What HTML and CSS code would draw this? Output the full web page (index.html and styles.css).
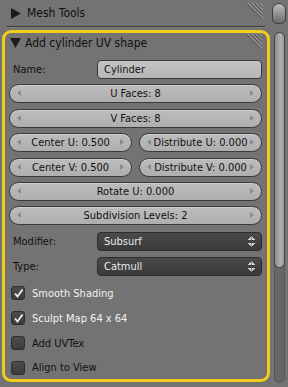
FILE: index.html
```html
<!DOCTYPE html>
<html>
<head>
  <title>Mesh Tools</title>
  <link rel="stylesheet" href="styles.css">
</head>
<body>
  <div class="app">
    <div class="main">
      <div class="hdr">
        <svg class="tri" width="10" height="11" viewBox="0 0 10 11"><polygon points="0,0 10,5.5 0,11" fill="#1c1c1c"/></svg>
        <span>Mesh Tools</span>
        <svg class="grip" width="16" height="16" viewBox="0 0 16 16">
          <path d="M1 0 L16 15 M5 0 L16 11 M9 0 L16 7 M13 0 L16 3" stroke="#9c9c9c" stroke-width="1"/>
          <path d="M0 1 L15 16 M4 1 L15 12 M8 1 L15 8 M12 1 L15 4" stroke="#5a5a5a" stroke-width="1"/>
        </svg>
      </div>
      <div class="sep"></div>

      <div class="panel">
        <div class="ptitle">
          <svg class="tri" width="11" height="10" viewBox="0 0 11 10"><polygon points="0,0 11,0 5.5,10" fill="#1c1c1c"/></svg>
          <span>Add cylinder UV shape</span>
          <svg class="grip" width="16" height="16" viewBox="0 0 16 16">
            <path d="M1 0 L16 15 M5 0 L16 11 M9 0 L16 7 M13 0 L16 3" stroke="#9c9c9c" stroke-width="1"/>
            <path d="M0 1 L15 16 M4 1 L15 12 M8 1 L15 8 M12 1 L15 4" stroke="#5a5a5a" stroke-width="1"/>
          </svg>
        </div>

        <div class="rows">
          <div class="row">
            <span class="label">Name:</span>
            <div class="field">Cylinder</div>
          </div>
          <div class="num"><i class="arr l"></i>U Faces: 8<i class="arr r"></i></div>
          <div class="num"><i class="arr l"></i>V Faces: 8<i class="arr r"></i></div>
          <div class="pair">
            <div class="num"><i class="arr l"></i>Center U: 0.500<i class="arr r"></i></div>
            <div class="num"><i class="arr l"></i>Distribute U: 0.000<i class="arr r"></i></div>
          </div>
          <div class="pair">
            <div class="num"><i class="arr l"></i>Center V: 0.500<i class="arr r"></i></div>
            <div class="num"><i class="arr l"></i>Distribute V: 0.000<i class="arr r"></i></div>
          </div>
          <div class="num"><i class="arr l"></i>Rotate U: 0.000<i class="arr r"></i></div>
          <div class="num"><i class="arr l"></i>Subdivision Levels: 2<i class="arr r"></i></div>

          <div class="row menu-row">
            <span class="label">Modifier:</span>
            <div class="menu">Subsurf<i class="updown"></i></div>
          </div>
          <div class="row">
            <span class="label">Type:</span>
            <div class="menu">Catmull<i class="updown"></i></div>
          </div>

          <div class="check on first"><span class="box">
            <svg width="11" height="11" viewBox="0 0 11 11"><path d="M2 5.5 L4.5 8.5 L9.5 1.5" stroke="#f0f0f0" stroke-width="1.8" fill="none"/></svg>
          </span>Smooth Shading</div>
          <div class="check on"><span class="box">
            <svg width="11" height="11" viewBox="0 0 11 11"><path d="M2 5.5 L4.5 8.5 L9.5 1.5" stroke="#f0f0f0" stroke-width="1.8" fill="none"/></svg>
          </span>Sculpt Map 64 x 64</div>
          <div class="check"><span class="box"></span>Add UVTex</div>
          <div class="check"><span class="box"></span>Align to View</div>
        </div>
      </div>
    </div>

    <div class="side">
      <div class="knob"></div>
      <div class="track"><div class="thumb"></div></div>
    </div>
  </div>
</body>
</html>
```

FILE: styles.css
```css
body {
  margin: 0;
  background-color: #737373;
  font-family: "DejaVu Sans Condensed", "DejaVu Sans", sans-serif;
  font-stretch: condensed;
  font-size: 11px;
  color: #111;
  width: 288px;
  height: 387px;
  overflow: hidden;
}
.app {
  display: grid;
  grid-template-columns: 270px 18px;
  height: 387px;
}
.main {
  display: flex;
  flex-direction: column;
}
.hdr {
  height: 26px;
  display: flex;
  align-items: center;
  padding-left: 11px;
  position: relative;
  font-size: 12px;
}
.hdr .tri {
  margin-right: 6px;
}
.sep {
  height: 1px;
  margin: 0 5px 0 6px;
  background-color: #3e3e3e;
  border-bottom: 1px solid #7e7e7e;
}
.grip {
  position: absolute;
  right: 7px;
  top: 3px;
}
.panel {
  margin: 2px 0 5px 2px;
  flex: 1;
  border: 3px solid #f2cd1c;
  border-radius: 9px;
  display: flex;
  flex-direction: column;
}
.ptitle {
  height: 20px;
  display: flex;
  align-items: center;
  padding-left: 5px;
  position: relative;
  font-size: 12px;
}
.ptitle .tri {
  margin-right: 4px;
}
.ptitle .grip {
  right: 5px;
  top: 0;
}
.rows {
  display: flex;
  flex-direction: column;
  gap: 5.4px;
  padding: 7px 5px 0 4px;
}
.row {
  display: flex;
  align-items: center;
  height: 19px;
}
.label {
  width: 84px;
  padding-left: 4px;
  flex-shrink: 0;
}
.field {
  flex: 1;
  height: 17px;
  line-height: 17px;
  border: 1px solid #3a3a3a;
  border-radius: 4px;
  background: linear-gradient(#c4c4c4, #b6b6b6);
  padding-left: 6px;
}
.num {
  height: 17px;
  line-height: 17px;
  border: 1px solid #3a3a3a;
  border-radius: 10px;
  background: linear-gradient(#bdbdbd, #aeaeae);
  box-shadow: inset 0 1px 0 #cfcfcf;
  text-align: center;
  position: relative;
  white-space: nowrap;
}
.arr {
  position: absolute;
  top: 5px;
  width: 0;
  height: 0;
  border-top: 3px solid transparent;
  border-bottom: 3px solid transparent;
}
.arr.l {
  left: 7px;
  border-right: 4px solid #8a8a8a;
}
.arr.r {
  right: 7px;
  border-left: 4px solid #8a8a8a;
}
.pair {
  display: grid;
  grid-template-columns: 1fr 1fr;
  gap: 7px;
}
.menu-row {
  margin-top: 1.5px;
}
.menu {
  flex: 1;
  height: 17px;
  line-height: 17px;
  border: 1px solid #2c2c2c;
  border-radius: 4px;
  background: linear-gradient(#4a4a4a, #3a3a3a);
  color: #ececec;
  padding-left: 6px;
  position: relative;
}
.updown {
  position: absolute;
  right: 6px;
  top: 3px;
  width: 7px;
  height: 11px;
  background:
    linear-gradient(to bottom right, transparent 50%, #cfcfcf 50%) left top / 3.5px 4px no-repeat,
    linear-gradient(to bottom left, transparent 50%, #cfcfcf 50%) right top / 3.5px 4px no-repeat,
    linear-gradient(to top right, transparent 50%, #cfcfcf 50%) left bottom / 3.5px 4px no-repeat,
    linear-gradient(to top left, transparent 50%, #cfcfcf 50%) right bottom / 3.5px 4px no-repeat;
}
.check {
  height: 19.5px;
  display: flex;
  align-items: center;
  padding-left: 2px;
  color: #111;
}
.check.first {
  margin-top: 2.5px;
}
.check.on {
  color: #f2f2f2;
}
.box {
  width: 12px;
  height: 12px;
  border: 1px solid #2e2e2e;
  border-radius: 3px;
  background: linear-gradient(#4c4c4c, #3c3c3c);
  margin-right: 7px;
  display: flex;
  align-items: center;
  justify-content: center;
}
.side {
  display: flex;
  flex-direction: column;
  padding: 3px 2px 4px 2px;
}
.knob {
  height: 19px;
  border: 1px solid #3c3c3c;
  border-radius: 8px 8px 6px 6px;
  background: linear-gradient(#bdbdbd, #8a8a8a 60%, #6a6a6a);
  margin: 0 0 8px 0;
}
.track {
  flex: 1;
  margin: 0 1px 0 2px;
  border: 1px solid #555;
  border-radius: 6px;
  background-color: #666;
}
.thumb {
  height: 234px;
  border: 1px solid #444;
  border-radius: 6px;
  margin: -1px;
  background: linear-gradient(90deg, #8e8e8e, #b0b0b0 60%, #999);
}
```
